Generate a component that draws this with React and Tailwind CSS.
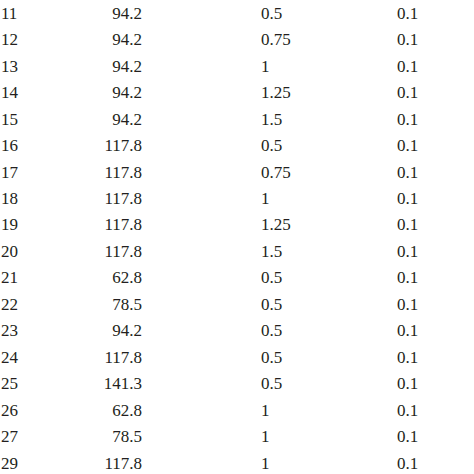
const rows = [
  ['11', '94.2', '0.5', '0.1'],
  ['12', '94.2', '0.75', '0.1'],
  ['13', '94.2', '1', '0.1'],
  ['14', '94.2', '1.25', '0.1'],
  ['15', '94.2', '1.5', '0.1'],
  ['16', '117.8', '0.5', '0.1'],
  ['17', '117.8', '0.75', '0.1'],
  ['18', '117.8', '1', '0.1'],
  ['19', '117.8', '1.25', '0.1'],
  ['20', '117.8', '1.5', '0.1'],
  ['21', '62.8', '0.5', '0.1'],
  ['22', '78.5', '0.5', '0.1'],
  ['23', '94.2', '0.5', '0.1'],
  ['24', '117.8', '0.5', '0.1'],
  ['25', '141.3', '0.5', '0.1'],
  ['26', '62.8', '1', '0.1'],
  ['27', '78.5', '1', '0.1'],
  ['29', '117.8', '1', '0.1'],
];

export default function App() {
  return (
    <div className="w-[474px] h-[474px] overflow-hidden bg-white text-[#231f20] font-[family-name:'Liberation_Serif',serif] text-[17px]">
      {rows.map((r) => (
        <div key={r[0]} className="grid grid-cols-[60px_82px_255px_1fr] h-[26.47px] items-center leading-none">
          <span className="pl-px">{r[0]}</span>
          <span className="text-right">{r[1]}</span>
          <span className="pl-[119px]">{r[2]}</span>
          <span>{r[3]}</span>
        </div>
      ))}
    </div>
  );
}
